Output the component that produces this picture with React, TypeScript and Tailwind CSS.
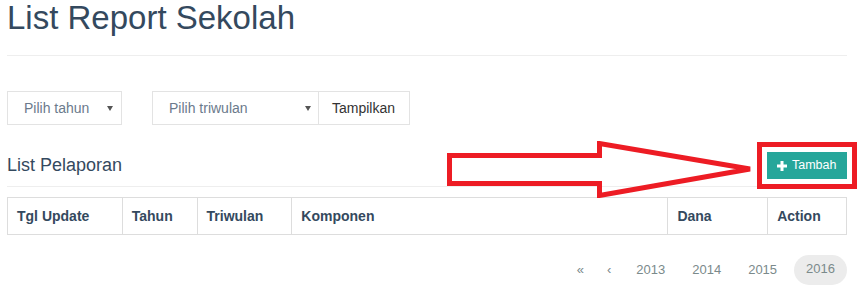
import React from "react";

const Caret = () => (
  <svg width="6" height="5" viewBox="0 0 6 5" className="shrink-0">
    <path d="M0 0 H6 L3 5 Z" fill="#555" />
  </svg>
);

export default function App() {
  const cols = [
    { label: "Tgl Update", w: "w-[115px]" },
    { label: "Tahun", w: "w-[75px]" },
    { label: "Triwulan", w: "w-[95px]" },
    { label: "Komponen", w: "w-[377px]" },
    { label: "Dana", w: "w-[100px]" },
    { label: "Action", w: "w-[79px]" },
  ];
  return (
    <div
      className="w-[862px] h-[288px] overflow-hidden bg-white"
      style={{ fontFamily: '"Liberation Sans", Arial, sans-serif' }}
    >
      <div className="ml-[7px] w-[840px]">
        <div className="pb-[19px] border-b border-[#eeeeee]">
          <h1 className="text-[33px] leading-[36px] text-[#34495e] font-normal">
            List Report Sekolah
          </h1>
        </div>

        <div className="mt-[35px] flex items-stretch h-[34px] text-[14px]">
          <div className="w-[115px] border border-[#e3e3e3] flex items-center justify-between pl-[16px] pr-[8px] text-[#6b7a8c]">
            <span>Pilih tahun</span>
            <Caret />
          </div>
          <div className="ml-[30px] w-[167px] border border-[#e3e3e3] flex items-center justify-between pl-[16px] pr-[7px] text-[#6b7a8c]">
            <span>Pilih triwulan</span>
            <Caret />
          </div>
          <div className="w-[91px] border border-l-0 border-[#e3e3e3] flex items-center pl-[13px] text-[#333333]">
            Tampilkan
          </div>
        </div>

        <div className="relative mt-[27px] pb-[7px] border-b border-[#eeeeee] flex justify-between items-start">
          <h2 className="text-[18px] leading-[27px] text-[#34495e] font-normal">
            List Pelaporan
          </h2>
          <svg
            className="absolute left-[440px] top-[-11px]"
            width="310"
            height="57"
            viewBox="0 0 310 57"
          >
            <path
              d="M2.5 14.5 H152.5 V2.5 L303 28 L152.5 54.5 V42.5 H2.5 Z"
              fill="none"
              stroke="#ed1c24"
              strokeWidth="5"
              strokeLinejoin="miter"
            />
          </svg>
          <div className="relative">
            <div className="absolute -inset-[10px] border-[5px] border-[#ed1c24]" />
            <div className="w-[80px] h-[27px] bg-[#26a69a] text-white text-[12.5px] flex items-center pl-[10px] gap-[5px]">
              <svg width="10" height="10" viewBox="0 0 10 10">
                <rect x="3.5" y="0" width="3" height="10" fill="#fff" />
                <rect x="0" y="3.5" width="10" height="3" fill="#fff" />
              </svg>
              <span>Tambah</span>
            </div>
          </div>
        </div>

        <div className="mt-[10px] flex border-t border-b border-r border-[#dddddd] h-[38px]">
          {cols.map((c, i) => (
            <div
              key={i}
              className={`${c.w} border-l border-[#dddddd] flex items-center pl-[9px] text-[14px] font-bold text-[#34495e]`}
            >
              {c.label}
            </div>
          ))}
        </div>

        <div className="mt-[20px] flex justify-end items-center gap-[3px] text-[13px] text-[#7b8a8b]">
          <span className="pl-[12px] pr-[8px] leading-[30px]">«</span>
          <span className="pl-[12px] pr-[10px] leading-[30px]">‹</span>
          <span className="px-[12px] leading-[30px]">2013</span>
          <span className="px-[12px] leading-[30px]">2014</span>
          <span className="px-[12px] leading-[30px]">2015</span>
          <span className="ml-[2px] px-[12px] h-[30px] leading-[27px] bg-[#ececec] rounded-[15px]">2016</span>
        </div>
      </div>
    </div>
  );
}
